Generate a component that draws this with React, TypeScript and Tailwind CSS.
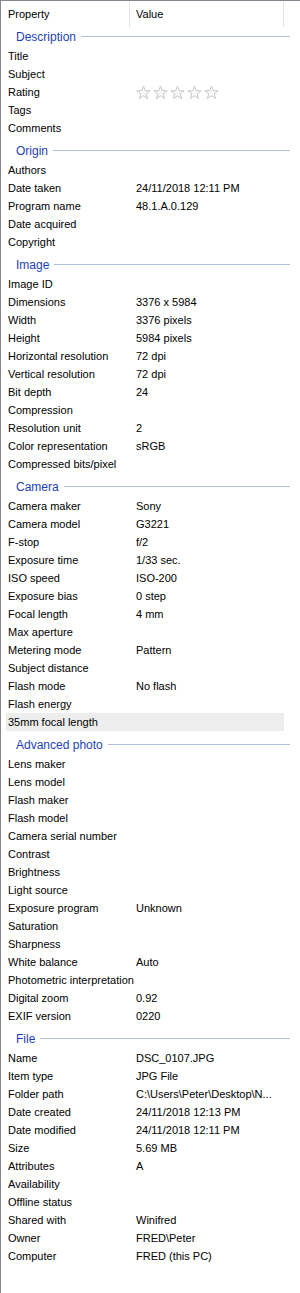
import React from 'react';

type Row = { name: string; value?: string; stars?: boolean; selected?: boolean };
type Group = { title: string; rows: Row[] };

const groups: Group[] = [
  {
    title: 'Description',
    rows: [
      { name: 'Title' },
      { name: 'Subject' },
      { name: 'Rating', stars: true },
      { name: 'Tags' },
      { name: 'Comments' },
    ],
  },
  {
    title: 'Origin',
    rows: [
      { name: 'Authors' },
      { name: 'Date taken', value: '24/11/2018 12:11 PM' },
      { name: 'Program name', value: '48.1.A.0.129' },
      { name: 'Date acquired' },
      { name: 'Copyright' },
    ],
  },
  {
    title: 'Image',
    rows: [
      { name: 'Image ID' },
      { name: 'Dimensions', value: '3376 x 5984' },
      { name: 'Width', value: '3376 pixels' },
      { name: 'Height', value: '5984 pixels' },
      { name: 'Horizontal resolution', value: '72 dpi' },
      { name: 'Vertical resolution', value: '72 dpi' },
      { name: 'Bit depth', value: '24' },
      { name: 'Compression' },
      { name: 'Resolution unit', value: '2' },
      { name: 'Color representation', value: 'sRGB' },
      { name: 'Compressed bits/pixel' },
    ],
  },
  {
    title: 'Camera',
    rows: [
      { name: 'Camera maker', value: 'Sony' },
      { name: 'Camera model', value: 'G3221' },
      { name: 'F-stop', value: 'f/2' },
      { name: 'Exposure time', value: '1/33 sec.' },
      { name: 'ISO speed', value: 'ISO-200' },
      { name: 'Exposure bias', value: '0 step' },
      { name: 'Focal length', value: '4 mm' },
      { name: 'Max aperture' },
      { name: 'Metering mode', value: 'Pattern' },
      { name: 'Subject distance' },
      { name: 'Flash mode', value: 'No flash' },
      { name: 'Flash energy' },
      { name: '35mm focal length', selected: true },
    ],
  },
  {
    title: 'Advanced photo',
    rows: [
      { name: 'Lens maker' },
      { name: 'Lens model' },
      { name: 'Flash maker' },
      { name: 'Flash model' },
      { name: 'Camera serial number' },
      { name: 'Contrast' },
      { name: 'Brightness' },
      { name: 'Light source' },
      { name: 'Exposure program', value: 'Unknown' },
      { name: 'Saturation' },
      { name: 'Sharpness' },
      { name: 'White balance', value: 'Auto' },
      { name: 'Photometric interpretation' },
      { name: 'Digital zoom', value: '0.92' },
      { name: 'EXIF version', value: '0220' },
    ],
  },
  {
    title: 'File',
    rows: [
      { name: 'Name', value: 'DSC_0107.JPG' },
      { name: 'Item type', value: 'JPG File' },
      { name: 'Folder path', value: 'C:\\Users\\Peter\\Desktop\\N...' },
      { name: 'Date created', value: '24/11/2018 12:13 PM' },
      { name: 'Date modified', value: '24/11/2018 12:11 PM' },
      { name: 'Size', value: '5.69 MB' },
      { name: 'Attributes', value: 'A' },
      { name: 'Availability' },
      { name: 'Offline status' },
      { name: 'Shared with', value: 'Winifred' },
      { name: 'Owner', value: 'FRED\\Peter' },
      { name: 'Computer', value: 'FRED (this PC)' },
    ],
  },
];

function Star() {
  return (
    <svg width="15" height="15" viewBox="0 0 16 16">
      <path
        d="M8 1.2 L9.9 6 L15 6.2 L11 9.4 L12.4 14.5 L8 11.6 L3.6 14.5 L5 9.4 L1 6.2 L6.1 6 Z"
        fill="#f7f7f7"
        stroke="#c4c4c4"
        strokeWidth="1"
        strokeLinejoin="round"
      />
    </svg>
  );
}

function GroupHeader({ title, first }: { title: string; first?: boolean }) {
  return (
    <div className={`flex items-end pb-[2px] ${first ? 'h-[20px]' : 'h-[24px]'}`}>
      <div className="flex items-center w-full pl-[15px] pr-[10px] h-[16px]">
        <span className="text-[12px] leading-[16px] text-[#1e3fb4] whitespace-nowrap">{title}</span>
        <div className="flex-1 ml-[5px] h-px bg-[#b3bfda] -mt-[1px]" />
      </div>
    </div>
  );
}

export default function App() {
  return (
    <div
      className="w-[300px] h-[1293px] bg-white border-t border-l border-[#828790] overflow-hidden text-[11px] text-black"
      style={{ fontFamily: '"Liberation Sans", Arial, sans-serif' }}
    >
      {/* column header */}
      <div className="flex h-[26px]">
        <div className="w-[129px] pl-[7px] pt-[5px] leading-[14px] mt-[1px] border-r border-[#e3e3e3]">Property</div>
        <div className="w-[154px] pl-[6px] pt-[5px] leading-[14px] mt-[1px] border-r border-[#e3e3e3]">Value</div>
      </div>

      {groups.map((g, gi) => (
        <div key={g.title}>
          <GroupHeader title={g.title} first={gi === 0} />
          {g.rows.map(r => (
            <div
              key={r.name}
              className={`flex items-center ml-[5px] w-[278px] h-[18px] ${r.selected ? 'bg-[#ededed]' : ''}`}
            >
              <div className="w-[130px] pl-[2px] leading-[18px] whitespace-nowrap overflow-hidden">{r.name}</div>
              <div className="flex-1 leading-[18px] whitespace-nowrap">
                {r.stars ? (
                  <div className="flex gap-[2px] pt-[1px]">
                    <Star />
                    <Star />
                    <Star />
                    <Star />
                    <Star />
                  </div>
                ) : (
                  r.value
                )}
              </div>
            </div>
          ))}
        </div>
      ))}
    </div>
  );
}
